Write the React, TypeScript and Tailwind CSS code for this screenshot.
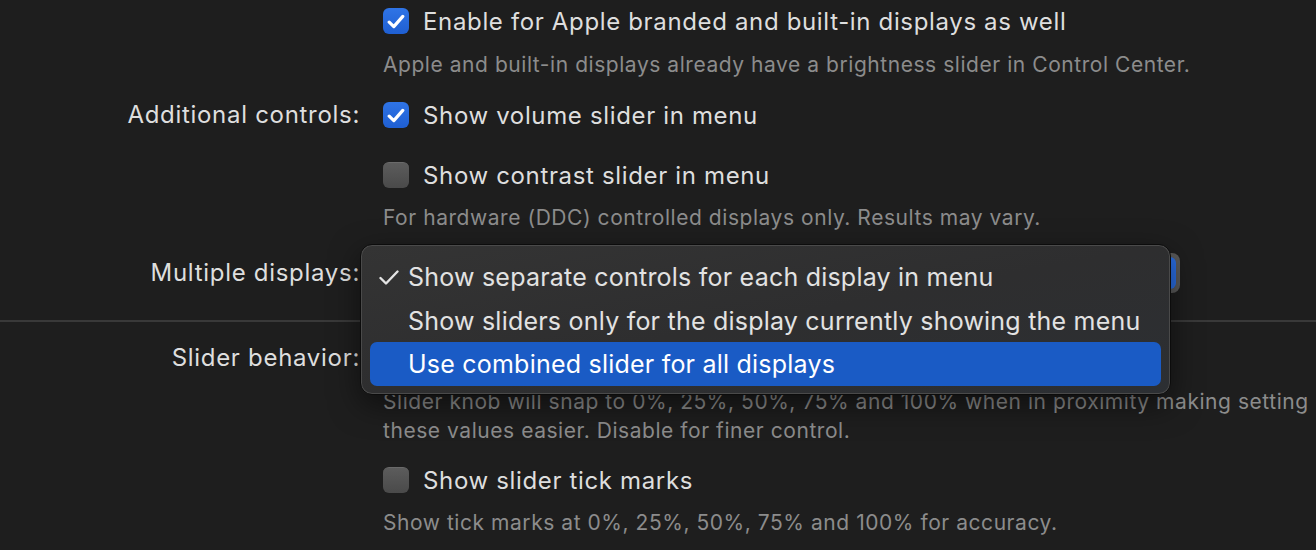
import React from "react";

const Check = () => (
  <svg width="18" height="15" viewBox="0 0 18 15" fill="none">
    <path
      d="M2.2 8.2 L6.8 12.6 L15.8 2.4"
      stroke="white"
      strokeWidth="3.2"
      strokeLinecap="round"
      strokeLinejoin="round"
    />
  </svg>
);

const Checkbox = ({ checked }: { checked?: boolean }) =>
  checked ? (
    <div className="w-[26px] h-[26px] rounded-[6px] bg-gradient-to-b from-[#2f74e6] to-[#1f5fd2] flex items-center justify-center shrink-0">
      <Check />
    </div>
  ) : (
    <div className="w-[26px] h-[26px] rounded-[6px] bg-gradient-to-b from-[#5c5c5c] to-[#4a4a4a] border-t border-[#6a6a6a] shrink-0" />
  );

const Row = ({
  label,
  children,
  className = "",
}: {
  label?: string;
  children: React.ReactNode;
  className?: string;
}) => (
  <div className={"flex items-center " + className}>
    <div className="w-[361px] text-right pr-[1px] shrink-0 text-[24px] tracking-[0.7px] text-[#dedede] whitespace-nowrap">
      {label}
    </div>
    <div className="pl-[22px] flex items-center gap-[14px]">{children}</div>
  </div>
);

const Sub = ({ children, className = "" }: { children: React.ReactNode; className?: string }) => (
  <div
    className={
      "pl-[383px] text-[21px] tracking-[0.55px] leading-[29px] text-[#8c8c8c] whitespace-nowrap " + className
    }
  >
    {children}
  </div>
);

const CheckRow = ({
  label,
  text,
  checked,
  className = "",
}: {
  label?: string;
  text: string;
  checked?: boolean;
  className?: string;
}) => (
  <Row label={label} className={"h-[42px] " + className}>
    <Checkbox checked={checked} />
    <span className="text-[24px] tracking-[0.65px] text-[#dedede] whitespace-nowrap pt-[1px]">{text}</span>
  </Row>
);

const menuItems = [
  "Show separate controls for each display in menu",
  "Show sliders only for the display currently showing the menu",
  "Use combined slider for all displays",
];

export default function App() {
  return (
    <div className="relative w-[1316px] h-[550px] overflow-hidden bg-[#1e1e1e] font-['Inter','Noto_Sans',sans-serif] antialiased">
      <CheckRow text="Enable for Apple branded and built-in displays as well" checked />
      <Sub className="mt-[8px]">
        Apple and built-in displays already have a brightness slider in Control Center.
      </Sub>
      <CheckRow className="mt-[15px]" label="Additional controls:" text="Show volume slider in menu" checked />
      <CheckRow className="mt-[18px]" text="Show contrast slider in menu" />
      <Sub className="mt-[7px]">For hardware (DDC) controlled displays only. Results may vary.</Sub>

      <Row label="Multiple displays:" className="h-[40px] mt-[21px]">
        <div className="-ml-[22px] w-[819px] h-[40px] rounded-[8px] bg-[#5a5a5a] flex justify-end p-[4px]">
          <div className="w-[28px] h-full rounded-[6px] bg-[#2a6ee4]" />
        </div>
      </Row>

      <div className="mt-[27px] h-[2px] bg-[#393939]" />

      <CheckRow className="mt-[15px]" label="Slider behavior:" text="Enable slider snapping" checked />
      <Sub className="mt-[8px]">
        Slider knob will snap to 0%, 25%, 50%, 75% and 100% when in proximity making setting
        <br />
        these values easier. Disable for finer control.
      </Sub>
      <CheckRow className="mt-[14px]" text="Show slider tick marks" />
      <Sub className="mt-[7px]">Show tick marks at 0%, 25%, 50%, 75% and 100% for accuracy.</Sub>

      {/* popup menu */}
      <div className="absolute top-[244px] left-[360px] w-[811px] h-[151px] rounded-[12px] border border-[#0c0c0c] bg-gradient-to-br from-[#343434] via-[#2e2e2f] to-[#2c2f33] shadow-[inset_0_0_0_1px_#4a4a4a,0_10px_30px_rgba(0,0,0,0.5)] pt-[10px] px-[9px]">
        {menuItems.map((item, i) => (
          <div
            key={item}
            className={
              "h-[44px] flex items-center rounded-[7px] text-[25px] tracking-[0.22px] whitespace-nowrap " +
              (i === 2 ? "bg-[#1a5bc5] text-white -mt-[1px]" : "text-[#e2e2e2]")
            }
          >
            <div className="w-[38px] pl-[9px] flex items-center">
              {i === 0 && (
                <svg width="20" height="15" viewBox="0 0 20 15" fill="none">
                  <path
                    d="M1.5 8 L7 13.5 L18.5 1.5"
                    stroke="#e4e4e4"
                    strokeWidth="2.4"
                    strokeLinecap="round"
                    strokeLinejoin="round"
                  />
                </svg>
              )}
            </div>
            <span className="pt-[1px]">{item}</span>
          </div>
        ))}
      </div>
    </div>
  );
}
